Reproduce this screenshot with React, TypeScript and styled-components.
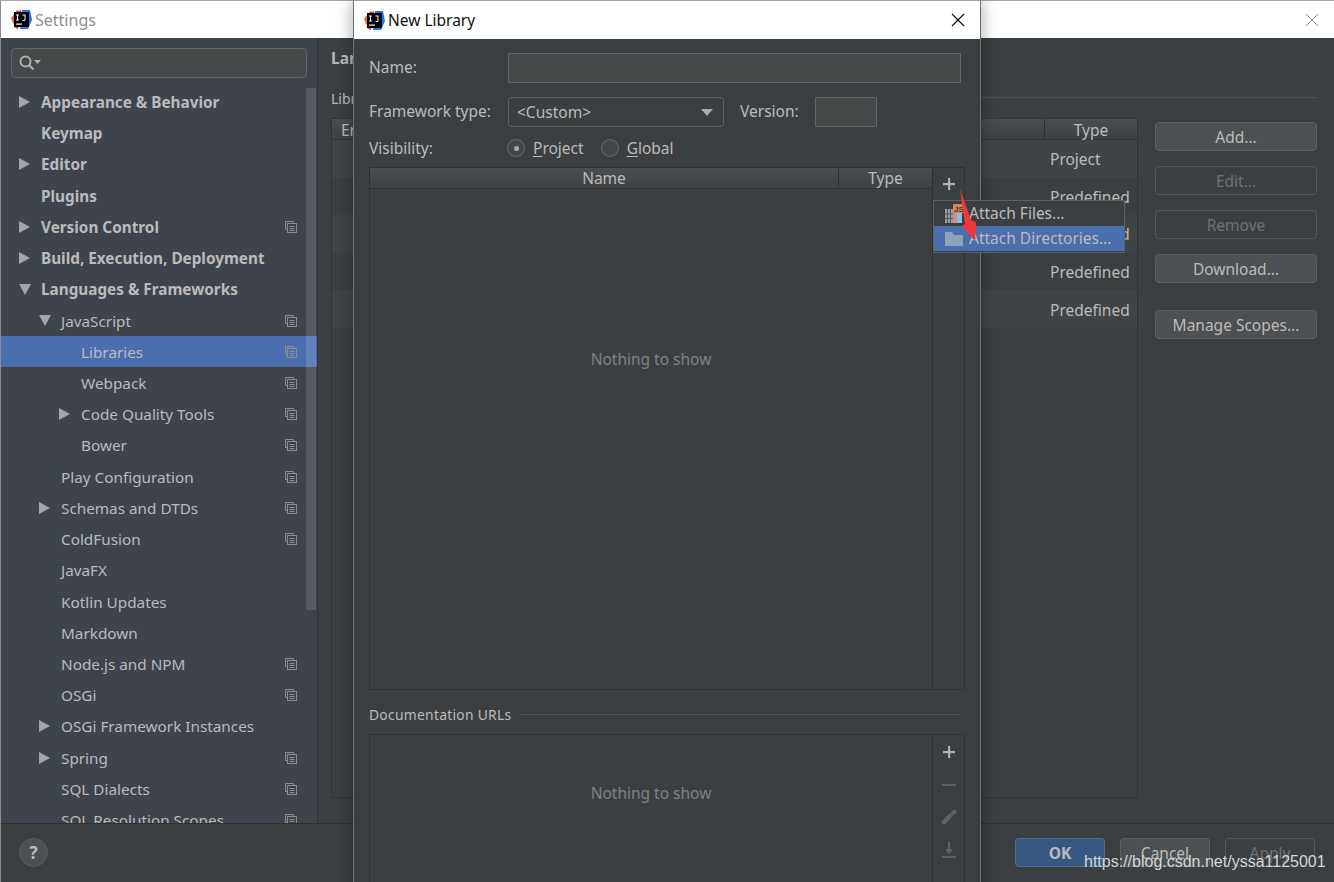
import { createGlobalStyle, styled } from "styled-components";

const GlobalStyle = createGlobalStyle`
  html, body {
    margin: 0;
    padding: 0;
    background: #3c3f41;
    overflow: hidden;
  }
  * {
    box-sizing: border-box;
  }
`;

const Desktop = styled.div`
  position: relative;
  width: 1334px;
  height: 882px;
  overflow: hidden;
  font-family: "Noto Sans", "Open Sans", sans-serif;
  font-size: 15.5px;
  color: #bbbbbb;
`;

const SettingsWindow = styled.div`
  width: 100%;
  height: 100%;
  display: flex;
  flex-direction: column;
  border-left: 1px solid #8c8c8c;
  border-top: 1px solid #a8a8a8;
  background: #3c3f41;
`;

const TitleBar = styled.div<{ $height: number }>`
  height: ${(p) => p.$height}px;
  flex: none;
  background: #ffffff;
  display: flex;
  align-items: center;
  padding: 0 10px;
  gap: 3px;
`;

const TitleText = styled.span<{ $active?: boolean }>`
  color: ${(p) => (p.$active ? "#111111" : "#8f8f8f")};
  font-size: ${(p) => (p.$active ? 15.5 : 16)}px;
`;

const CloseButton = styled.svg`
  margin-left: auto;
  margin-right: 5px;
  width: 14px;
  height: 14px;
`;

const SettingsBody = styled.div`
  flex: 1;
  min-height: 0;
  display: flex;
`;

const Sidebar = styled.div`
  position: relative;
  width: 317px;
  flex: none;
  background: #3e434c;
  border-right: 1px solid #323438;
  display: flex;
  flex-direction: column;
  overflow: hidden;
`;

const SearchBox = styled.div`
  height: 30px;
  margin: 10px 10px 8.4px 10px;
  flex: none;
  background: #45494a;
  border: 1px solid #646464;
  border-radius: 4px;
  display: flex;
  align-items: center;
  padding-left: 6px;
  color: #aeb0b1;
`;

const TreeList = styled.div`
  flex: 1;
  min-height: 0;
  overflow: hidden;
  font-size: 15.3px;
`;

const TreeRow = styled.div<{ $level: number; $selected?: boolean }>`
  height: 31.22px;
  display: flex;
  align-items: center;
  padding-left: ${(p) => 18 + p.$level * 20}px;
  padding-right: 20px;
  background: ${(p) => (p.$selected ? "#4b6eaf" : "transparent")};
  white-space: nowrap;
`;

const ArrowSlot = styled.span`
  width: 22px;
  flex: none;
  display: flex;
  align-items: center;
  color: #a3a5a7;
`;

const TreeLabel = styled.span<{ $bold?: boolean }>`
  font-weight: ${(p) => (p.$bold ? 700 : 400)};
  flex: 1;
  color: #bbbbbb;
`;

const ScrollThumb = styled.div`
  position: absolute;
  left: 305px;
  top: 50px;
  width: 10px;
  height: 522px;
  background: rgba(255, 255, 255, 0.13);
`;

const MainPanel = styled.div`
  flex: 1;
  min-width: 0;
  padding: 10px 17px 0 13px;
  display: flex;
  flex-direction: column;
`;

const PageHeading = styled.div`
  height: 20px;
  line-height: 20px;
  font-weight: 700;
  white-space: nowrap;
`;

const SectionRow = styled.div`
  margin-top: 20px;
  height: 20px;
  display: flex;
  align-items: center;
  gap: 8px;
  font-size: 14px;
`;

const SectionRule = styled.div`
  flex: 1;
  height: 1px;
  margin-top: -2px;
  background: #4f5254;
`;

const LibrarySplit = styled.div`
  margin-top: 10px;
  display: flex;
  gap: 17px;
`;

const LibraryTable = styled.div`
  width: 807px;
  height: 680px;
  border: 1px solid #323232;
  display: flex;
  flex-direction: column;
`;

const HeaderRow = styled.div`
  height: 21px;
  flex: none;
  display: flex;
  background: linear-gradient(#4b4e50, #3e4143);
  border-bottom: 1px solid #303234;
`;

const HeaderCell = styled.div<{ $width?: number; $align?: string; $tall?: boolean }>`
  ${(p) => (p.$width ? `width: ${p.$width}px; flex: none;` : "flex: 1;")}
  text-align: ${(p) => p.$align || "center"};
  line-height: ${(p) => (p.$tall ? 22 : 20)}px;
  padding-left: ${(p) => (p.$align === "left" ? 9 : 0)}px;
  border-left: 1px solid #2f3133;
  &:first-child {
    border-left: none;
  }
`;

const LibraryRow = styled.div<{ $odd: boolean }>`
  height: 37.6px;
  flex: none;
  display: flex;
  align-items: center;
  justify-content: flex-end;
  padding: 1px 7px 0 0;
  background: ${(p) => (p.$odd ? "#414446" : "transparent")};
`;

const TypeValue = styled.span`
  width: 80px;
  white-space: nowrap;
`;

const ActionColumn = styled.div`
  width: 162px;
  padding-top: 4px;
  display: flex;
  flex-direction: column;
  gap: 15px;
`;

const PushButton = styled.div<{ $disabled?: boolean; $spaced?: boolean; $width?: number }>`
  height: 29px;
  ${(p) => (p.$width ? `width: ${p.$width}px;` : "")}
  margin-top: ${(p) => (p.$spaced ? 12 : 0)}px;
  flex: none;
  border: 1px solid ${(p) => (p.$disabled ? "#55585a" : "#5e6060")};
  border-radius: 4px;
  background: ${(p) => (p.$disabled ? "transparent" : "#4c5052")};
  color: ${(p) => (p.$disabled ? "#6f7173" : "#bbbbbb")};
  text-align: center;
  line-height: 28px;
`;

const Footer = styled.div`
  height: 59px;
  flex: none;
  border-top: 1px solid #2e3032;
  display: flex;
  justify-content: space-between;
  padding: 14px 19px 0 18px;
`;

const HelpButton = styled.div`
  width: 29px;
  height: 29px;
  border-radius: 50%;
  background: #4c5052;
  border: 1px solid #5a5d5f;
  text-align: center;
  line-height: 27px;
  font-weight: 700;
  font-size: 17px;
`;

const FooterButtons = styled.div`
  display: flex;
  gap: 15px;
`;

const DefaultButton = styled(PushButton)`
  background: #365880;
  border-color: #4c708c;
  font-weight: 700;
`;

const Dialog = styled.div`
  position: absolute;
  left: 353px;
  top: 0;
  width: 628px;
  height: 900px;
  background: #3c3f41;
  border: 1px solid #6f7172;
  border-top-color: #a0a0a0;
  box-shadow: 0 0 16px rgba(0, 0, 0, 0.35);
  display: flex;
  flex-direction: column;
`;

const DialogBody = styled.div`
  padding: 14px 15px 0 15px;
  display: flex;
  flex-direction: column;
`;

const FormRow = styled.div<{ $height: number; $top: number }>`
  height: ${(p) => p.$height}px;
  margin-top: ${(p) => p.$top}px;
  flex: none;
  display: flex;
  align-items: center;
`;

const FieldLabel = styled.span<{ $raised?: boolean }>`
  width: 139px;
  flex: none;
  padding-bottom: ${(p) => (p.$raised ? 2 : 0)}px;
`;

const TextInput = styled.div<{ $width?: number }>`
  ${(p) => (p.$width ? `width: ${p.$width}px; flex: none;` : "flex: 1; margin-right: 4px;")}
  height: 30px;
  background: #45494a;
  border: 1px solid #646464;
`;

const SelectBox = styled.div`
  width: 216px;
  height: 30px;
  flex: none;
  background: #3c3f41;
  border: 1px solid #646464;
  border-radius: 4px;
  display: flex;
  align-items: center;
  justify-content: space-between;
  padding: 0 10px 0 8px;
`;

const VersionLabel = styled.span`
  margin: 0 16px 2px 16px;
`;

const RadioCircle = styled.span<{ $checked?: boolean }>`
  width: 18px;
  height: 18px;
  flex: none;
  border-radius: 50%;
  border: 1px solid #6b6b6b;
  background: #43474a;
  display: flex;
  align-items: center;
  justify-content: center;
  margin: 0 8px 0 -1px;
  &::after {
    content: "";
    display: ${(p) => (p.$checked ? "block" : "none")};
    width: 5px;
    height: 5px;
    border-radius: 50%;
    background: #a9abad;
  }
`;

const RadioText = styled.span<{ $gap?: number }>`
  margin-right: ${(p) => p.$gap || 0}px;
  u {
    text-underline-offset: 2px;
  }
`;

const ListPanel = styled.div<{ $height: number; $top: number }>`
  height: ${(p) => p.$height}px;
  margin-top: ${(p) => p.$top}px;
  flex: none;
  border: 1px solid #2f3133;
  display: flex;
`;

const ListMain = styled.div`
  flex: 1;
  min-width: 0;
  display: flex;
  flex-direction: column;
`;

const EmptyText = styled.div<{ $top: number }>`
  padding-top: ${(p) => p.$top}px;
  text-align: center;
  color: #7f8183;
  line-height: 20px;
`;

const ListToolbar = styled.div<{ $top?: number }>`
  width: 32px;
  flex: none;
  border-left: 1px solid #2f3133;
  padding-top: ${(p) => p.$top || 0}px;
  display: flex;
  flex-direction: column;
`;

const ToolSlot = styled.div`
  height: 32.6px;
  flex: none;
  display: flex;
  align-items: center;
  justify-content: center;
`;

const GroupTitle = styled.div`
  display: flex;
  align-items: center;
  gap: 8px;
  width: 592px;
  font-size: 13.8px;
  letter-spacing: 0.3px;
`;

const GroupRule = styled.div`
  flex: 1;
  height: 1px;
  background: #505355;
`;

const PopupMenu = styled.div`
  position: absolute;
  left: 933px;
  top: 200px;
  width: 192px;
  height: 53px;
  background: #3c3f41;
  border: 1px solid #5f6163;
`;

const MenuRow = styled.div<{ $active?: boolean }>`
  height: 25px;
  display: flex;
  align-items: center;
  gap: 5px;
  padding-left: 10px;
  background: ${(p) => (p.$active ? "#4b6eaf" : "transparent")};
`;

const MenuLabel = styled.span`
  padding-bottom: 2px;
`;

const RedArrow = styled.svg`
  position: absolute;
  left: 950px;
  top: 180px;
  width: 40px;
  height: 70px;
`;

const Watermark = styled.div`
  position: absolute;
  left: 1084px;
  top: 852px;
  font-family: "Liberation Sans", Arial, sans-serif;
  font-size: 16px;
  line-height: 20px;
  color: #d5d6d7;
  white-space: nowrap;
`;

function IdeaLogo() {
  return (
    <svg width="21" height="21" viewBox="0 0 21 21">
      <path d="M0 9 L6 1 L12 4 L6 20 L2 14 Z" fill="#f26a2e" />
      <path d="M3 4 L10 1 L7 20 L3 18 Z" fill="#e5235f" />
      <path d="M11 1 L19 1 L21 11 L17 20 L9 20 Z" fill="#1b78e5" />
      <rect x="3" y="3" width="15" height="15" fill="#000000" />
      <path d="M5 5.5h3v1H7v4h1v1H5v-1h1v-4H5zM11.5 5.5h3v5a1.5 1.5 0 0 1-1.5 1.5h-1.5v-1H13a.5.5 0 0 0 .5-.5v-4h-2z" fill="#ffffff" />
      <rect x="5" y="14.5" width="6" height="1.2" fill="#ffffff" />
    </svg>
  );
}

function ProjectScopeIcon() {
  return (
    <svg width="12" height="12" viewBox="0 0 12 12" fill="none" stroke="#8a8e90" strokeWidth="1">
      <path d="M8.5 2.5V0.5H0.5V8.5H2.5" />
      <rect x="2.5" y="2.5" width="9" height="9" />
      <path d="M4.5 5.5h5M4.5 7.5h5M4.5 9.5h5" />
    </svg>
  );
}

function PlusIcon() {
  return (
    <svg width="14" height="14" viewBox="0 0 14 14">
      <path d="M6 1h2.2v5H13v2.2H8.2V13H6V8.2H1V6h5z" fill="#afb1b3" />
    </svg>
  );
}

function LibraryJsIcon() {
  return (
    <svg width="20" height="20" viewBox="0 0 20 20">
      <rect x="1" y="5" width="8" height="14" fill="#9a9a9a" />
      <path d="M3.5 5v14M6.5 5v14M1 10h8M1 14.5h8" stroke="#55585a" />
      <rect x="9" y="9" width="4" height="10" fill="#d98a85" />
      <rect x="13" y="9" width="5" height="10" fill="#7fc3e6" />
      <rect x="9" y="0" width="10" height="9" fill="#d9825a" />
      <text x="10" y="8" fontSize="8" fontWeight="700" fontFamily="Liberation Sans" fill="#4a3a30">JS</text>
    </svg>
  );
}

const treeItems = [
  { label: "Appearance & Behavior", level: 0, arrow: "right", bold: true },
  { label: "Keymap", level: 0, bold: true },
  { label: "Editor", level: 0, arrow: "right", bold: true },
  { label: "Plugins", level: 0, bold: true },
  { label: "Version Control", level: 0, arrow: "right", bold: true, scoped: true },
  { label: "Build, Execution, Deployment", level: 0, arrow: "right", bold: true },
  { label: "Languages & Frameworks", level: 0, arrow: "down", bold: true },
  { label: "JavaScript", level: 1, arrow: "down", scoped: true },
  { label: "Libraries", level: 2, selected: true, scoped: true },
  { label: "Webpack", level: 2, scoped: true },
  { label: "Code Quality Tools", level: 2, arrow: "right", scoped: true },
  { label: "Bower", level: 2, scoped: true },
  { label: "Play Configuration", level: 1, scoped: true },
  { label: "Schemas and DTDs", level: 1, arrow: "right", scoped: true },
  { label: "ColdFusion", level: 1, scoped: true },
  { label: "JavaFX", level: 1 },
  { label: "Kotlin Updates", level: 1 },
  { label: "Markdown", level: 1 },
  { label: "Node.js and NPM", level: 1, scoped: true },
  { label: "OSGi", level: 1, scoped: true },
  { label: "OSGi Framework Instances", level: 1, arrow: "right" },
  { label: "Spring", level: 1, arrow: "right", scoped: true },
  { label: "SQL Dialects", level: 1, scoped: true },
  { label: "SQL Resolution Scopes", level: 1, scoped: true },
];

const libraryTypes = ["Project", "Predefined", "Predefined", "Predefined", "Predefined"];

export default function App() {
  return (
    <Desktop>
      <GlobalStyle />
      <SettingsWindow>
        <TitleBar $height={37}>
          <IdeaLogo />
          <TitleText>Settings</TitleText>
          <CloseButton viewBox="0 0 14 14" stroke="#8f8f8f" strokeWidth="1">
            <path d="M1 1l12 12M13 1L1 13" />
          </CloseButton>
        </TitleBar>
        <SettingsBody>
          <Sidebar>
            <SearchBox>
              <svg width="24" height="18" viewBox="0 0 24 18" fill="none" stroke="#aeb0b1">
                <circle cx="7.5" cy="7.5" r="5" strokeWidth="2" />
                <path d="M11 11l4.5 4.5" strokeWidth="2" />
                <path d="M16 6h7l-3.5 4z" fill="#aeb0b1" stroke="none" />
              </svg>
            </SearchBox>
            <TreeList>
              {treeItems.map((item) => (
                <TreeRow key={item.label} $level={item.level} $selected={item.selected}>
                  <ArrowSlot>
                    {item.arrow === "right" && (
                      <svg width="11" height="12" viewBox="0 0 11 12">
                        <path d="M0 0l11 6-11 6z" fill="currentColor" />
                      </svg>
                    )}
                    {item.arrow === "down" && (
                      <svg width="12" height="11" viewBox="0 0 12 11">
                        <path d="M0 0h12l-6 11z" fill="currentColor" />
                      </svg>
                    )}
                  </ArrowSlot>
                  <TreeLabel $bold={item.bold}>{item.label}</TreeLabel>
                  {item.scoped && <ProjectScopeIcon />}
                </TreeRow>
              ))}
            </TreeList>
            <ScrollThumb />
          </Sidebar>
          <MainPanel>
            <PageHeading>Languages &amp; Frameworks</PageHeading>
            <SectionRow>
              Libraries
              <SectionRule />
            </SectionRow>
            <LibrarySplit>
              <LibraryTable>
                <HeaderRow>
                  <HeaderCell $align="left" $tall>Enabled</HeaderCell>
                  <HeaderCell $width={93} $tall>Type</HeaderCell>
                </HeaderRow>
                {libraryTypes.map((type, i) => (
                  <LibraryRow key={i} $odd={i % 2 === 0}>
                    <TypeValue>{type}</TypeValue>
                  </LibraryRow>
                ))}
              </LibraryTable>
              <ActionColumn>
                <PushButton>Add...</PushButton>
                <PushButton $disabled>Edit...</PushButton>
                <PushButton $disabled>Remove</PushButton>
                <PushButton>Download...</PushButton>
                <PushButton $spaced>Manage Scopes...</PushButton>
              </ActionColumn>
            </LibrarySplit>
          </MainPanel>
        </SettingsBody>
        <Footer>
          <HelpButton>?</HelpButton>
          <FooterButtons>
            <DefaultButton $width={90}>OK</DefaultButton>
            <PushButton $width={90}>Cancel</PushButton>
            <PushButton $width={90} $disabled>Apply</PushButton>
          </FooterButtons>
        </Footer>
      </SettingsWindow>

      <Dialog>
        <TitleBar $height={38}>
          <IdeaLogo />
          <TitleText $active>New Library</TitleText>
          <CloseButton viewBox="0 0 14 14" stroke="#111111" strokeWidth="1.2">
            <path d="M1 1l12 12M13 1L1 13" />
          </CloseButton>
        </TitleBar>
        <DialogBody>
          <FormRow $height={30} $top={0}>
            <FieldLabel $raised>Name:</FieldLabel>
            <TextInput />
          </FormRow>
          <FormRow $height={30} $top={14}>
            <FieldLabel $raised>Framework type:</FieldLabel>
            <SelectBox>
              &lt;Custom&gt;
              <svg width="12" height="7" viewBox="0 0 12 7">
                <path d="M0 0h12l-6 7z" fill="#a9abad" />
              </svg>
            </SelectBox>
            <VersionLabel>Version:</VersionLabel>
            <TextInput $width={62} />
          </FormRow>
          <FormRow $height={20} $top={11}>
            <FieldLabel>Visibility:</FieldLabel>
            <RadioCircle $checked />
            <RadioText $gap={18}>
              <u>P</u>roject
            </RadioText>
            <RadioCircle />
            <RadioText>
              <u>G</u>lobal
            </RadioText>
          </FormRow>
          <ListPanel $height={523} $top={9}>
            <ListMain>
              <HeaderRow>
                <HeaderCell>Name</HeaderCell>
                <HeaderCell $width={94}>Type</HeaderCell>
              </HeaderRow>
              <EmptyText $top={160}>Nothing to show</EmptyText>
            </ListMain>
            <ListToolbar>
              <ToolSlot>
                <PlusIcon />
              </ToolSlot>
            </ListToolbar>
          </ListPanel>
          <FormRow $height={20} $top={14}>
            <GroupTitle>
              Documentation URLs
              <GroupRule />
            </GroupTitle>
          </FormRow>
          <ListPanel $height={180} $top={10}>
            <ListMain>
              <EmptyText $top={48}>Nothing to show</EmptyText>
            </ListMain>
            <ListToolbar $top={1}>
              <ToolSlot>
                <PlusIcon />
              </ToolSlot>
              <ToolSlot>
                <svg width="14" height="14" viewBox="0 0 14 14">
                  <rect x="0" y="6" width="14" height="2" fill="#5f6163" />
                </svg>
              </ToolSlot>
              <ToolSlot>
                <svg width="18" height="18" viewBox="0 0 18 18" fill="none" stroke="#5f6163">
                  <path d="M2.5 15.5L11.5 6.5" strokeWidth="4.5" />
                  <path d="M13 5L14.5 3.5" strokeWidth="4" strokeLinecap="round" />
                </svg>
              </ToolSlot>
              <ToolSlot>
                <svg width="16" height="18" viewBox="0 0 16 18">
                  <path d="M7 1h2v7h3l-4 5-4-5h3zM1 15h14v2H1z" fill="#5f6163" />
                </svg>
              </ToolSlot>
            </ListToolbar>
          </ListPanel>
        </DialogBody>
      </Dialog>

      <PopupMenu>
        <MenuRow>
          <LibraryJsIcon />
          <MenuLabel>Attach Files...</MenuLabel>
        </MenuRow>
        <MenuRow $active>
          <svg width="20" height="16" viewBox="0 0 20 16">
            <path d="M1 1h7l2 3h9v11H1z" fill="#8fa3b8" />
          </svg>
          <MenuLabel>Attach Directories...</MenuLabel>
        </MenuRow>
      </PopupMenu>

      <RedArrow viewBox="0 0 40 70">
        <path d="M10 9 L21 40 L26 42 L25 61 L12 46 L15 44 Z" fill="#f0383a" />
      </RedArrow>

      <Watermark>https://blog.csdn.net/yssa1125001</Watermark>
    </Desktop>
  );
}
